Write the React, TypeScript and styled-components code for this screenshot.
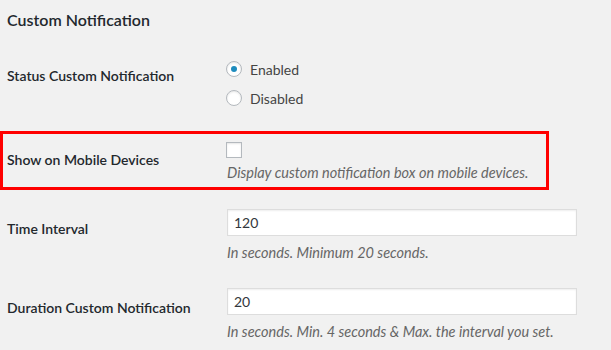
import React from 'react';
import styled, { createGlobalStyle } from 'styled-components';

const GlobalStyle = createGlobalStyle`
  html, body {
    margin: 0;
    padding: 0;
    background: #f1f1f1;
  }
  body {
    font-family: Lato, "Open Sans", sans-serif;
    color: #23282d;
  }
`;

const Page = styled.div`
  width: 611px;
  height: 350px;
  overflow: hidden;
  display: flex;
  flex-direction: column;
`;

const Title = styled.h2`
  margin: 0;
  padding: 9px 0 0 7px;
  font-size: 16px;
  line-height: 22px;
  font-weight: 600;
  color: #23282d;
`;

const Row = styled.div<{ top: number; highlighted?: boolean }>`
  display: grid;
  grid-template-columns: 219px 1fr;
  align-items: start;
  margin-top: ${(p) => p.top}px;
  padding-left: ${(p) => (p.highlighted ? 4 : 7)}px;
  ${(p) =>
    p.highlighted &&
    `
    width: 549px;
    box-sizing: border-box;
    border: 3px solid #ff0000;
    padding-top: 8px;
    padding-bottom: 5px;
  `}
`;

const Label = styled.div<{ offset: number }>`
  padding-top: ${(p) => p.offset}px;
  font-size: 14px;
  line-height: 20px;
  font-weight: 600;
  color: #23282d;
`;

const Control = styled.div`
  display: flex;
  flex-direction: column;
  align-items: flex-start;
`;

const RadioList = styled.div`
  display: flex;
  flex-direction: column;
  gap: 9px;
`;

const RadioLabel = styled.label`
  display: flex;
  align-items: center;
  gap: 8px;
  height: 20px;
  font-size: 14px;
  color: #444;
`;

const Radio = styled.input.attrs({ type: 'radio' })`
  appearance: none;
  margin: 0;
  width: 16px;
  height: 16px;
  box-sizing: border-box;
  border: 1px solid #b4b9be;
  border-radius: 50%;
  background: #fff;
  box-shadow: inset 0 1px 2px rgba(0, 0, 0, 0.1);
  display: grid;
  place-items: center;

  &:checked::before {
    content: '';
    width: 6px;
    height: 6px;
    border-radius: 50%;
    background: #1e8cbe;
  }
`;

const Checkbox = styled.input.attrs({ type: 'checkbox' })`
  appearance: none;
  margin: 0;
  width: 16px;
  height: 16px;
  box-sizing: border-box;
  border: 1px solid #b4b9be;
  background: #fff;
  box-shadow: inset 0 1px 2px rgba(0, 0, 0, 0.1);
`;

const TextInput = styled.input.attrs({ type: 'text' })`
  margin: 0 0 0 1px;
  width: 350px;
  height: 27px;
  box-sizing: border-box;
  border: 1px solid #ddd;
  box-shadow: inset 0 1px 2px rgba(0, 0, 0, 0.07);
  background: #fff;
  padding: 0 6px;
  font-family: Lato, "Open Sans", sans-serif;
  font-size: 14px;
  color: #32373c;
  outline: none;
`;

const Description = styled.p<{ gap: number }>`
  margin: ${(p) => p.gap}px 0 0 1px;
  font-size: 14.5px;
  line-height: 18px;
  font-style: italic;
  color: #666;
`;

export default function App() {
  return (
    <Page>
      <GlobalStyle />
      <Title>Custom Notification</Title>

      <Row top={28}>
        <Label offset={7}>Status Custom Notification</Label>
        <RadioList>
          <RadioLabel>
            <Radio name="status" defaultChecked />
            Enabled
          </RadioLabel>
          <RadioLabel>
            <Radio name="status" />
            Disabled
          </RadioLabel>
        </RadioList>
      </Row>

      <Row top={23} highlighted>
        <Label offset={8}>Show on Mobile Devices</Label>
        <Control>
          <Checkbox />
          <Description gap={6}>Display custom notification box on mobile devices.</Description>
        </Control>
      </Row>

      <Row top={19}>
        <Label offset={10}>Time Interval</Label>
        <Control>
          <TextInput defaultValue="120" />
          <Description gap={8}>In seconds. Minimum 20 seconds.</Description>
        </Control>
      </Row>

      <Row top={26}>
        <Label offset={10}>Duration Custom Notification</Label>
        <Control>
          <TextInput defaultValue="20" />
          <Description gap={8}>In seconds. Min. 4 seconds &amp; Max. the interval you set.</Description>
        </Control>
      </Row>
    </Page>
  );
}
